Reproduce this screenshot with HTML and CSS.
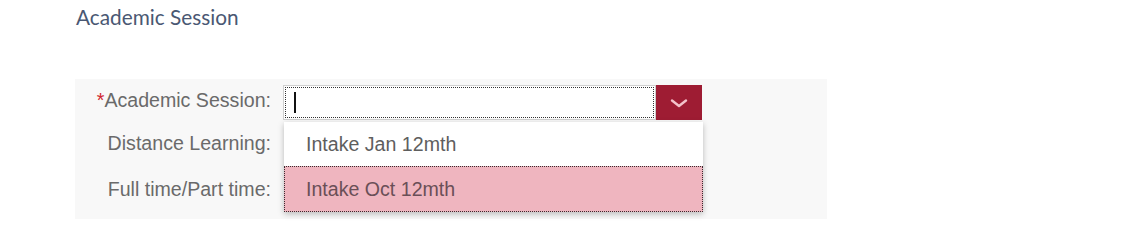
FILE: index.html
```html
<!DOCTYPE html>
<html>
<head>
<meta charset="utf-8">
<link rel="stylesheet" href="styles.css">
</head>
<body>
<h1 class="title">Academic Session</h1>
<div class="panel">
  <div class="form">
    <div class="label label-first"><span class="req">*</span>Academic Session:</div>
    <div class="field">
      <div class="combo">
        <div class="input"><span class="caret"></span></div>
        <div class="btn">
          <svg width="18" height="10" viewBox="0 0 18 10"><path d="M2 2.5 L9 8 L16 2.5" fill="none" stroke="#f3c2ca" stroke-width="2.4" stroke-linecap="round" stroke-linejoin="round"/></svg>
        </div>
      </div>
      <ul class="list">
        <li class="item">Intake Jan 12mth</li>
        <li class="item item-sel">Intake Oct 12mth</li>
      </ul>
    </div>
    <div class="label">Distance Learning:</div>
    <div class="empty"></div>
    <div class="label">Full time/Part time:</div>
    <div class="empty"></div>
  </div>
</div>
</body>
</html>
```

FILE: styles.css
```css
html, body {
  margin: 0;
  padding: 0;
  background: #ffffff;
}
body {
  width: 1130px;
  height: 229px;
  overflow: hidden;
}
.title {
  margin: 0;
  padding: 4px 0 0 76px;
  height: 75px;
  box-sizing: border-box;
  font-family: Lato, "Open Sans", sans-serif;
  font-weight: 400;
  font-size: 20.8px;
  line-height: 26px;
  color: #4a5873;
}
.panel {
  margin-left: 75px;
  margin-top: 4px;
  width: 752px;
  height: 140px;
  background: #f8f8f8;
  box-sizing: border-box;
  padding-top: 6px;
}
.form {
  display: grid;
  grid-template-columns: 196px 419px;
  grid-template-rows: 35px 46px 46px;
  column-gap: 12px;
  font-family: "Liberation Sans", Arial, sans-serif;
  font-size: 19.6px;
}
.label {
  display: flex;
  align-items: center;
  justify-content: flex-end;
  color: #6a6a6a;
  white-space: nowrap;
}
.label-first {
  padding-bottom: 4px;
}
.req {
  color: #d0262e;
}
.field {
  position: relative;
}
.combo {
  display: flex;
  height: 35px;
}
.input {
  flex: 1;
  background: #fff;
  border: 1px solid #cfcfcf;
  box-sizing: border-box;
  outline: 1px dotted #333;
  outline-offset: -3px;
  display: flex;
  align-items: center;
  padding-left: 10px;
}
.caret {
  display: block;
  width: 2px;
  height: 21px;
  background: #111;
}
.btn {
  width: 46px;
  background: #9e1c33;
  display: flex;
  align-items: center;
  justify-content: center;
}
.btn svg {
  display: block;
}
.list {
  position: absolute;
  left: 1px;
  top: 37px;
  width: 419px;
  margin: 0;
  padding: 0;
  list-style: none;
  background: #fff;
  box-shadow: 0 2px 6px rgba(0, 0, 0, 0.25);
}
.item {
  height: 44px;
  box-sizing: border-box;
  display: flex;
  align-items: center;
  padding-left: 22px;
  color: #5e5e5e;
}
.item-sel {
  height: 46px;
  background: #efb5bf;
  color: #6a4f57;
  outline: 1px dotted #3a2a2e;
  outline-offset: -1px;
}
```
